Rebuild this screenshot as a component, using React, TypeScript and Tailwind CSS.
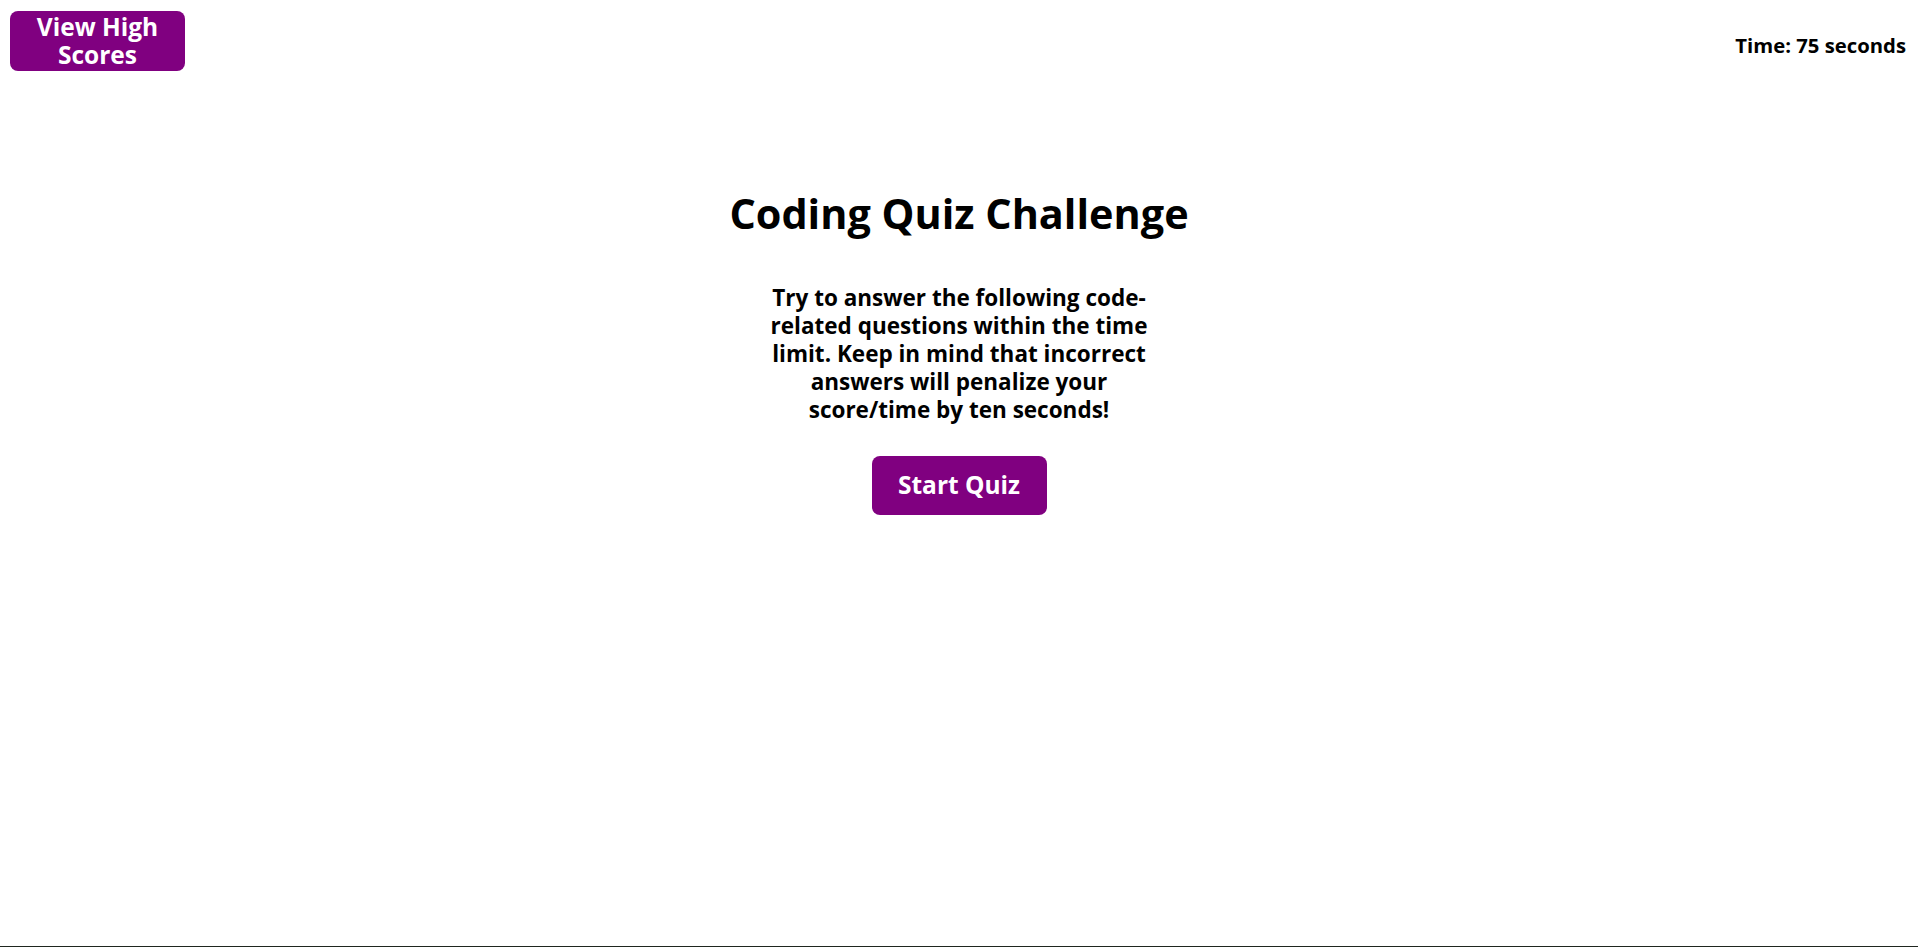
import React from 'react';

export default function App() {
  return (
    <div className="h-screen bg-white text-black border-b border-[#1f261f] font-['Open_Sans',sans-serif] font-bold">
      {/* Header */}
      <header className="flex justify-between items-center pl-[10px] pr-[12px] pt-[11px]">
        <button className="w-[175px] h-[60px] rounded-[8px] bg-[#800080] text-white text-[24.5px] leading-[28px] px-2">
          View High Scores
        </button>
        <p className="text-[20.3px] mt-[8px]">Time: 75 seconds</p>
      </header>

      {/* Start screen */}
      <main className="flex flex-col items-center mt-[117px]">
        <h1 className="text-[41.4px] leading-[50px]">Coding Quiz Challenge</h1>
        <p className="w-[390px] text-center text-[22.5px] leading-[28px] mt-[46px]">
          Try to answer the following code-related questions within the time limit. Keep in mind that incorrect answers will penalize your score/time by ten seconds!
        </p>
        <button className="mt-[32px] w-[175px] h-[59px] rounded-[8px] bg-[#800080] text-white text-[24.5px]">
          Start Quiz
        </button>
      </main>
    </div>
  );
}
